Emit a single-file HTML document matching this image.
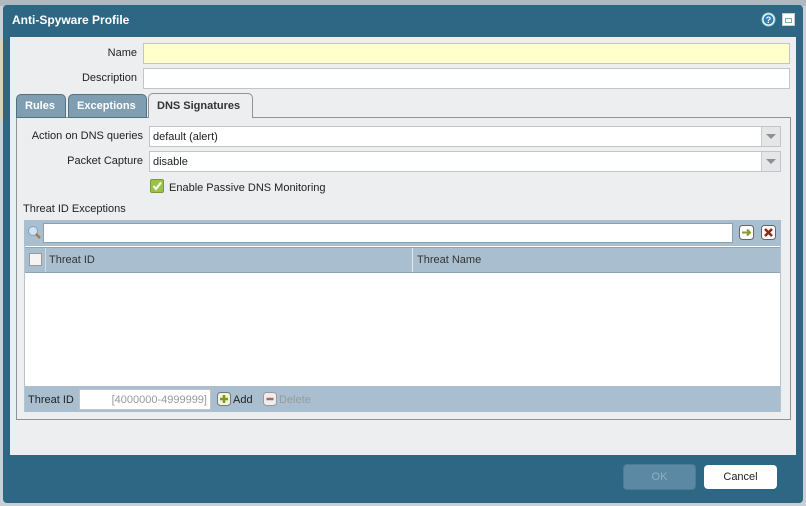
<!DOCTYPE html>
<html><head><style>
*{margin:0;padding:0;box-sizing:border-box}
body{width:806px;height:506px;background:#c9cfd4;position:relative;overflow:hidden;font-family:"Liberation Sans",sans-serif;font-size:11px;color:#222}
.a{position:absolute}
.lbl{position:absolute;text-align:right;white-space:nowrap}
.inp{position:absolute;background:#fff;border:1px solid #c4c4c4}
</style></head><body>
<div class="a" style="left:0;top:0;width:806px;height:6px;background:#b0b8bf"></div>
<div class="a" style="left:0;top:40px;width:10px;height:80px;background:#d9d4b8"></div>
<div class="a" style="left:3px;top:5px;width:800px;height:498px;background:#2e6784;border-radius:4px"></div>
<div class="a" style="left:12px;top:13px;color:#fff;font-weight:bold;font-size:12px">Anti-Spyware Profile</div>
<svg class="a" style="left:761px;top:12px" width="15" height="15"><circle cx="7.5" cy="7.5" r="6.5" fill="#fff" stroke="#9cc" stroke-width="1"/><circle cx="7.5" cy="7.5" r="5" fill="#2f7fb5"/><text x="7.5" y="11" font-size="9" font-weight="bold" fill="#fff" text-anchor="middle" font-family="Liberation Sans">?</text></svg>
<div class="a" style="left:782px;top:13px;width:13px;height:13px;background:#fff;border:1px solid #ccc"><div style="margin:4px 2px;height:5px;border:1px solid #8aa"></div></div>
<div class="a" style="left:10px;top:37px;width:786px;height:418px;background:#eceeef"></div>
<div class="lbl" style="left:20px;width:117px;top:47px">Name</div>
<div class="inp" style="left:143px;top:43px;width:647px;height:21px;background:#ffffcc"></div>
<div class="lbl" style="left:20px;width:117px;top:72px">Description</div>
<div class="inp" style="left:143px;top:68px;width:647px;height:21px"></div>
<div class="a" style="left:16px;top:117px;width:775px;height:303px;border:1px solid #8c9499"></div>
<div class="a" style="left:16px;top:94px;width:50px;height:24px;background:#7f9eb2;border:1px solid #55707f;border-radius:5px 5px 0 0;color:#fff;font-weight:bold;padding:5px 0 0 8px">Rules</div>
<div class="a" style="left:68px;top:94px;width:79px;height:24px;background:#7f9eb2;border:1px solid #55707f;border-radius:5px 5px 0 0;color:#fff;font-weight:bold;padding:5px 0 0 8px">Exceptions</div>
<div class="a" style="left:148px;top:93px;width:105px;height:25px;background:#eceeef;border:1px solid #8c9499;border-bottom:none;border-radius:5px 5px 0 0;color:#333;font-weight:bold;padding:6px 0 0 8px">DNS Signatures</div>
<div class="lbl" style="left:20px;width:123px;top:130px">Action on DNS queries</div>
<div class="inp" style="left:149px;top:126px;width:632px;height:21px;padding:4px 3px">default (alert)</div>
<div class="a" style="left:761px;top:127px;width:19px;height:19px;background:#e4e6e8;border-left:1px solid #ccc"><div style="margin:7px 4px;width:0;height:0;border-left:5px solid transparent;border-right:5px solid transparent;border-top:5px solid #8a9095"></div></div>
<div class="lbl" style="left:20px;width:123px;top:155px">Packet Capture</div>
<div class="inp" style="left:149px;top:151px;width:632px;height:21px;padding:4px 3px">disable</div>
<div class="a" style="left:761px;top:152px;width:19px;height:19px;background:#e4e6e8;border-left:1px solid #ccc"><div style="margin:7px 4px;width:0;height:0;border-left:5px solid transparent;border-right:5px solid transparent;border-top:5px solid #8a9095"></div></div>
<div class="a" style="left:150px;top:179px;width:14px;height:14px;background:#9bc34a;border:1px solid #7a9a3a;border-radius:2px"><svg width="12" height="12"><path d="M2.5 6 L5 9 L10 2.5" stroke="#fff" stroke-width="2" fill="none"/></svg></div>
<div class="a" style="left:169px;top:182px">Enable Passive DNS Monitoring</div>
<div class="a" style="left:23px;top:203px">Threat ID Exceptions</div>
<div class="a" style="left:24px;top:220px;width:757px;height:192px;background:#fff;border:1px solid #b8c4cc"></div>
<div class="a" style="left:24px;top:220px;width:757px;height:26px;background:#a9bfcf"></div>
<svg class="a" style="left:27px;top:225px" width="15" height="15"><circle cx="6" cy="6" r="4.5" fill="#cfe3f5" stroke="#7aa4c8"/><path d="M9 9 L13 13" stroke="#b07a3a" stroke-width="2.5"/></svg>
<div class="inp" style="left:43px;top:223px;width:690px;height:20px;border-color:#8da0ad"></div>
<svg class="a" style="left:739px;top:225px" width="16" height="16"><rect x="0.5" y="0.5" width="14" height="14" rx="3" fill="#fff" stroke="#666"/><path d="M3 7.5 H11 M8 4.5 L11 7.5 L8 10.5" stroke="#8a9a2a" stroke-width="2" fill="none"/></svg>
<svg class="a" style="left:761px;top:225px" width="16" height="16"><rect x="0.5" y="0.5" width="14" height="14" rx="3" fill="#fff" stroke="#666"/><path d="M4 4 L11 11 M11 4 L4 11" stroke="#8a2a10" stroke-width="2.5"/></svg>
<div class="a" style="left:25px;top:247px;width:755px;height:26px;background:#a9bfcf;border-top:1px solid #8ea5b5;border-bottom:1px solid #8ea5b5"></div>
<div class="a" style="left:29px;top:253px;width:13px;height:13px;background:#f4f4f4;border:1px solid #999"></div>
<div class="a" style="left:45px;top:248px;width:1px;height:24px;background:#d0dce4"></div>
<div class="a" style="left:49px;top:254px;color:#333">Threat ID</div>
<div class="a" style="left:412px;top:248px;width:1px;height:24px;background:#e0e8ee"></div>
<div class="a" style="left:417px;top:254px;color:#333">Threat Name</div>
<div class="a" style="left:25px;top:386px;width:755px;height:26px;background:#a9bfcf"></div>
<div class="a" style="left:28px;top:394px">Threat ID</div>
<div class="inp" style="left:79px;top:389px;width:132px;height:21px;color:#999;text-align:right;padding:4px 3px">[4000000-4999999]</div>
<svg class="a" style="left:217px;top:392px" width="15" height="15"><rect x="0.5" y="0.5" width="13" height="13" rx="3" fill="#f2f2e0" stroke="#777"/><path d="M7 3 V11 M3 7 H11" stroke="#7a9a10" stroke-width="2.5"/></svg>
<div class="a" style="left:233px;top:394px">Add</div>
<svg class="a" style="left:263px;top:392px" width="15" height="15"><rect x="0.5" y="0.5" width="13" height="13" rx="3" fill="#eee" stroke="#999"/><path d="M3.5 7 H10.5" stroke="#a66" stroke-width="2.5"/></svg>
<div class="a" style="left:279px;top:394px;color:#999">Delete</div>
<div class="a" style="left:623px;top:464px;width:73px;height:26px;background:#5b89a4;border:1px solid #4d7a94;border-radius:4px;color:#8fb0c4;text-align:center;line-height:24px">OK</div>
<div class="a" style="left:704px;top:465px;width:73px;height:24px;background:#fff;border-radius:4px;color:#222;text-align:center;line-height:24px">Cancel</div>
</body></html>
